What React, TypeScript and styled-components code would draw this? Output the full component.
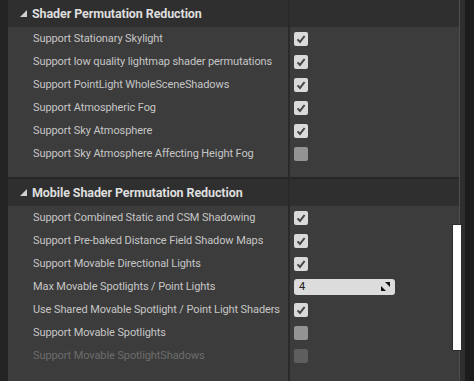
import React from 'react'
import styled, { createGlobalStyle } from 'styled-components'

const GlobalStyle = createGlobalStyle`
  html, body {
    margin: 0;
    padding: 0;
    background: #1c1c1c;
    overflow: hidden;
  }
  body {
    font-family: Roboto, "Liberation Sans", Arial, sans-serif;
  }
`

type Row = {
  label: string
  kind: 'check' | 'number'
  checked?: boolean
  disabled?: boolean
  value?: string
}

const shaderRows: Row[] = [
  { label: 'Support Stationary Skylight', kind: 'check', checked: true },
  { label: 'Support low quality lightmap shader permutations', kind: 'check', checked: true },
  { label: 'Support PointLight WholeSceneShadows', kind: 'check', checked: true },
  { label: 'Support Atmospheric Fog', kind: 'check', checked: true },
  { label: 'Support Sky Atmosphere', kind: 'check', checked: true },
  { label: 'Support Sky Atmosphere Affecting Height Fog', kind: 'check', checked: false }
]

const mobileRows: Row[] = [
  { label: 'Support Combined Static and CSM Shadowing', kind: 'check', checked: true },
  { label: 'Support Pre-baked Distance Field Shadow Maps', kind: 'check', checked: true },
  { label: 'Support Movable Directional Lights', kind: 'check', checked: true },
  { label: 'Max Movable Spotlights / Point Lights', kind: 'number', value: '4' },
  { label: 'Use Shared Movable Spotlight / Point Light Shaders', kind: 'check', checked: true },
  { label: 'Support Movable Spotlights', kind: 'check', checked: false },
  { label: 'Support Movable SpotlightShadows', kind: 'check', checked: false, disabled: true }
]

const Page = styled.div`
  display: flex;
  height: 381px;
  width: 474px;
  overflow: hidden;
`

const LeftGutter = styled.div`
  width: 8px;
  flex-shrink: 0;
  background: #242424;
`

const Panel = styled.div`
  position: relative;
  width: 451px;
  flex-shrink: 0;
  display: flex;
  flex-direction: column;
  border-right: 1px solid #4e4e4e;
`

const RightTrack = styled.div`
  display: flex;
  flex: 1;
`

const TrackInner = styled.div`
  width: 5px;
  background: #2e2e2e;
`

const TrackOuter = styled.div`
  flex: 1;
  background: #1c1c1c;
`

const Section = styled.div`
  display: flex;
  flex-direction: column;
  border-bottom: 2px solid #272727;
`

const Grid = styled.div<{ height: number; bg: string }>`
  display: grid;
  grid-template-columns: 282px 1fr;
  height: ${({ height }) => height}px;
  background: ${({ bg }) => bg};
`

const NameCell = styled.div`
  display: flex;
  align-items: center;
  border-right: 2px solid #2a2a2a;
  min-width: 0;
  white-space: nowrap;
`

const ValueCell = styled.div`
  display: flex;
  align-items: center;
  padding-left: 4px;
`

const HeaderTitle = styled.span`
  display: flex;
  align-items: center;
  gap: 5px;
  padding-left: 12px;
  font-size: 12.5px;
  font-weight: 700;
  color: #dedede;
  letter-spacing: -0.1px;
`

const Label = styled.span<{ disabled?: boolean }>`
  padding-left: 25px;
  font-size: 11px;
  color: ${({ disabled }) => (disabled ? '#6c6c6c' : '#c6c6c6')};
  letter-spacing: -0.1px;
`

const Box = styled.div<{ checked?: boolean; disabled?: boolean }>`
  width: 14px;
  height: 14px;
  border-radius: 2px;
  background: ${({ checked, disabled }) =>
    disabled ? '#5e5e5e' : checked ? '#dadada' : '#939393'};
  display: flex;
  align-items: center;
  justify-content: center;
`

const NumberBox = styled.div`
  width: 101px;
  height: 16px;
  box-sizing: border-box;
  border-radius: 3px;
  background: #dcdcdc;
  display: flex;
  align-items: center;
  justify-content: space-between;
  padding: 0 5px 0 5px;
  font-size: 11px;
  color: #202020;
`

const ScrollThumb = styled.div`
  position: absolute;
  left: 444px;
  top: 224px;
  width: 8px;
  height: 125px;
  background: #ffffff;
  border: 1px solid #2c2c2c;
`

const Triangle = () => (
  <svg width="7" height="7" viewBox="0 0 7 7">
    <polygon points="0,7 7,0 7,7" fill="#d0d0d0" />
  </svg>
)

const CheckMark = () => (
  <svg width="14" height="14" viewBox="0 0 14 14">
    <path d="M3.5 7.4 L6 9.9 L10.6 4" stroke="#454545" strokeWidth="2" fill="none" />
  </svg>
)

const SpinIcon = () => (
  <svg width="9" height="9" viewBox="0 0 9 9">
    <polygon points="4,0 9,0 9,5" fill="#111" />
    <polygon points="0,4 0,9 5,9" fill="#111" />
  </svg>
)

const PropertyRow = ({ row }: { row: Row }) => (
  <Grid height={23} bg="#3c3c3c">
    <NameCell>
      <Label disabled={row.disabled}>{row.label}</Label>
    </NameCell>
    <ValueCell>
      {row.kind === 'number' ? (
        <NumberBox>
          <span>{row.value}</span>
          <SpinIcon />
        </NumberBox>
      ) : (
        <Box checked={row.checked} disabled={row.disabled}>
          {row.checked && <CheckMark />}
        </Box>
      )}
    </ValueCell>
  </Grid>
)

const Category = ({ title, rows, tail }: { title: string; rows: Row[]; tail: number }) => (
  <Section>
    <Grid height={27} bg="#2f2f2f">
      <NameCell>
        <HeaderTitle>
          <Triangle />
          {title}
        </HeaderTitle>
      </NameCell>
      <ValueCell />
    </Grid>
    {rows.map(row => (
      <PropertyRow key={row.label} row={row} />
    ))}
    <Grid height={tail} bg="#3c3c3c">
      <NameCell />
      <ValueCell />
    </Grid>
  </Section>
)

export default function App() {
  return (
    <>
      <GlobalStyle />
      <Page>
        <LeftGutter />
        <Panel>
          <Category title="Shader Permutation Reduction" rows={shaderRows} tail={12} />
          <Category title="Mobile Shader Permutation Reduction" rows={mobileRows} tail={30} />
          <ScrollThumb />
        </Panel>
        <RightTrack>
          <TrackInner />
          <TrackOuter />
        </RightTrack>
      </Page>
    </>
  )
}
